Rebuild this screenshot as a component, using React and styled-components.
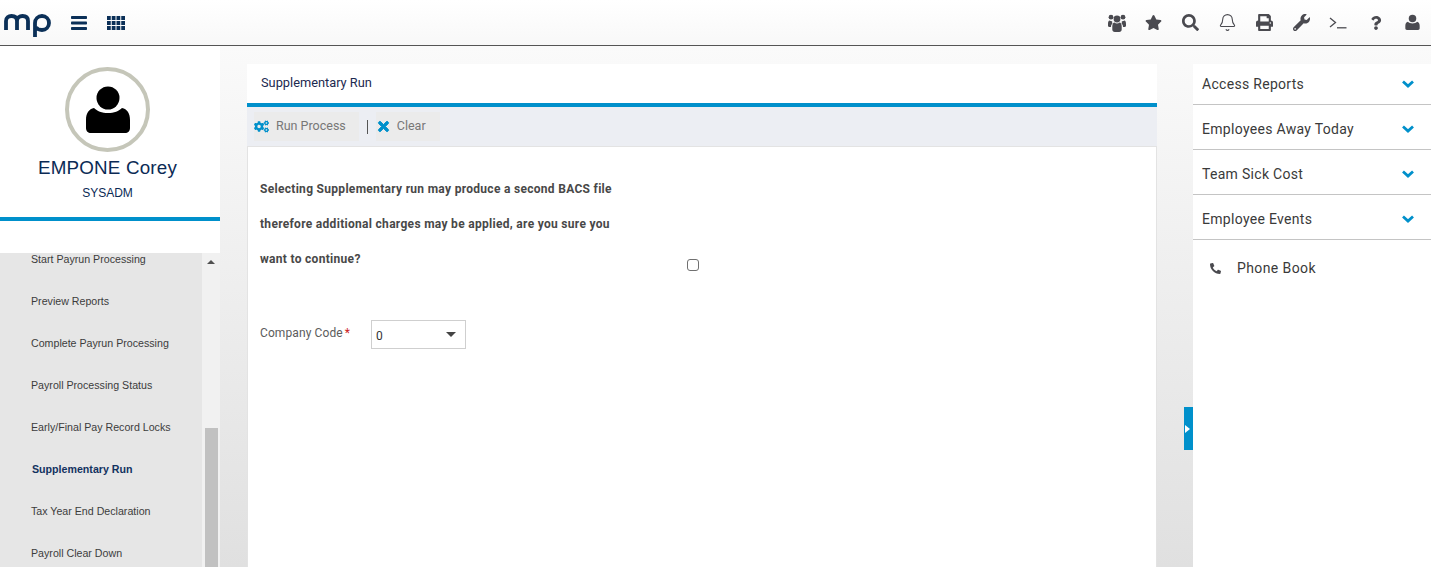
import React from "react";
import styled, { createGlobalStyle } from "styled-components";
import { FaStar, FaSearch, FaPrint, FaWrench, FaQuestion, FaPhone, FaCogs, FaTimes } from "react-icons/fa";
import { Bell } from "lucide-react";

const Global = createGlobalStyle`
  html, body { margin: 0; height: 100%; overflow: hidden; }
  body { font-family: Roboto, "Liberation Sans", sans-serif; background: #fff; }
  * { box-sizing: border-box; }
`;

const Pagina = styled.div`
  width: 1431px;
  height: 567px;
  display: flex;
  flex-direction: column;
  overflow: hidden;
`;

const Cabecera = styled.header`
  height: 46px;
  flex: none;
  display: flex;
  align-items: center;
  justify-content: space-between;
  background: linear-gradient(#ffffff, #f8f8f8);
  border-bottom: 1px solid #555;
  padding: 0 0 0 4px;
`;

const GrupoIzq = styled.div`
  display: flex;
  align-items: center;
  color: #0b3058;
`;

const Logo = styled.svg`
  width: 47px;
  height: 23px;
  margin: 6px 20px 0 0;
`;

const GrupoDer = styled.div`
  display: flex;
  align-items: center;
`;

const IconoBarra = styled.span`
  width: 37px;
  height: 22px;
  display: flex;
  align-items: center;
  justify-content: center;
  color: #4a4a50;
  font-size: ${(p) => p.$size || 17}px;
`;

const Cuerpo = styled.div`
  flex: 1;
  display: flex;
  min-height: 0;
  background: linear-gradient(#fafafa, #e0e0e0);
`;

const Lateral = styled.aside`
  width: 220px;
  flex: none;
  display: flex;
  flex-direction: column;
  background: #fff;
`;

const Perfil = styled.div`
  height: 175px;
  flex: none;
  border-bottom: 4px solid #0090cb;
  display: flex;
  flex-direction: column;
  align-items: center;
  padding: 21px 5px 0 0;
  color: #0b2a55;
`;

const Avatar = styled.div`
  width: 85px;
  height: 85px;
  border-radius: 50%;
  border: 4px solid #c5c6b9;
  color: #000;
  display: flex;
  align-items: center;
  justify-content: center;
`;

const Nombre = styled.div`
  font-family: "Liberation Sans", sans-serif;
  font-size: 18.8px;
  line-height: 22px;
  margin-top: 5px;
  letter-spacing: 0.2px;
`;

const Rol = styled.div`
  font-family: "Liberation Sans", sans-serif;
  font-size: 12px;
  line-height: 14px;
  margin-top: 7px;
`;

const Menu = styled.nav`
  margin-top: 32px;
  flex: 1;
  min-height: 0;
  display: flex;
  overflow: hidden;
`;

const MenuLista = styled.ul`
  width: 202px;
  flex: none;
  margin: 0;
  padding: 0;
  list-style: none;
  background: #e6e6e6;
`;

const MenuItem = styled.li`
  height: 42px;
  padding-left: ${(p) => (p.$activo ? 32 : 31)}px;
  font-family: "Liberation Sans", sans-serif;
  font-size: 10.65px;
  line-height: 13px;
  color: ${(p) => (p.$activo ? "#12325f" : "#3c3c3c")};
  font-weight: ${(p) => (p.$activo ? 700 : 400)};
`;

const BarraScroll = styled.div`
  width: 18px;
  flex: none;
  background: #f1f1f1;
  display: flex;
  flex-direction: column;
  align-items: center;
`;

const FlechaScroll = styled.div`
  margin-top: 7px;
  width: 0;
  height: 0;
  border-left: 4px solid transparent;
  border-right: 4px solid transparent;
  border-bottom: 4px solid #505050;
`;

const PulgarScroll = styled.div`
  width: 13px;
  flex: 1;
  margin-top: 164px;
  background: #c1c1c1;
  align-self: flex-start;
  margin-left: 3px;
`;

const Centro = styled.main`
  width: 910px;
  flex: none;
  margin: 18px 0 0 27px;
  display: flex;
  flex-direction: column;
`;

const TituloBarra = styled.div`
  height: 43px;
  flex: none;
  background: #fff;
  border-bottom: 4px solid #0090cb;
  padding-left: 14px;
  font-size: 12.8px;
  line-height: 37px;
  color: #1c2a50;
`;

const Herramientas = styled.div`
  height: 39px;
  flex: none;
  background: #eceef3;
  display: flex;
  align-items: center;
  padding-left: 7px;
  font-size: 12.5px;
`;

const BotonHerr = styled.button`
  height: 29px;
  border: none;
  background: #ebebeb;
  color: #777;
  font: inherit;
  display: flex;
  align-items: center;
  gap: ${(p) => p.$gap}px;
  padding: 0 ${(p) => p.$derecha}px 3px 0;
  cursor: pointer;
  svg { color: #0090cb; flex: none; margin-top: 3px; }
`;

const Separador = styled.span`
  width: 1px;
  height: 14px;
  background: #555;
  margin: 0 8px;
`;

const Contenido = styled.section`
  flex: 1;
  background: #fff;
  border: 1px solid #e3e3e3;
  border-bottom: none;
  padding: 25px 12px 0;
`;

const FilaAviso = styled.div`
  display: flex;
  align-items: flex-start;
`;

const Aviso = styled.div`
  width: 427px;
  flex: none;
  font-size: 12px;
  font-weight: 700;
  line-height: 35px;
  color: #484848;
  letter-spacing: 0.3px;
`;

const Casilla = styled.input`
  appearance: none;
  width: 12px;
  height: 12px;
  margin: 87px 0 0 0;
  background: #fff;
  border: 1px solid #707070;
  border-radius: 3px;
`;

const FilaCampo = styled.div`
  display: flex;
  align-items: flex-start;
  margin-top: 43px;
`;

const Etiqueta = styled.label`
  width: 111px;
  flex: none;
  font-size: 12px;
  line-height: 26px;
  color: #5c5c5c;
  letter-spacing: 0.1px;
  em { color: #c22; font-style: normal; margin-left: 2px; }
`;

const Selector = styled.div`
  width: 95px;
  height: 29px;
  border: 1px solid #cfcfcf;
  display: flex;
  align-items: center;
  justify-content: space-between;
  padding: 3px 9px 0 4px;
  font-size: 12px;
  color: #333;
`;

const Triangulo = styled.span`
  width: 0;
  height: 0;
  margin-top: -3px;
  border-left: 5px solid transparent;
  border-right: 5px solid transparent;
  border-top: 5px solid #444;
`;

const Derecha = styled.aside`
  width: 238px;
  flex: none;
  margin: 18px 0 0 36px;
  background: #fff;
  position: relative;
`;

const Acordeon = styled.div`
  height: 45px;
  border-bottom: 1px solid #c4c4c4;
  display: flex;
  align-items: flex-end;
  justify-content: space-between;
  padding: 0 17px 12px 9px;
  font-size: 14px;
  line-height: 16px;
  color: #3a3a3a;
  letter-spacing: 0.3px;
  &:first-child { height: 41px; }
  svg { margin-bottom: 4px; }
`;

const EnlaceTel = styled.div`
  display: flex;
  align-items: center;
  height: 56px;
  padding-left: 17px;
  font-size: 14px;
  color: #3a3a3a;
  letter-spacing: 0.4px;
  svg { color: #4a4a4f; margin-right: 16px; }
`;

const Asa = styled.div`
  position: absolute;
  left: -9px;
  top: 343px;
  width: 9px;
  height: 43px;
  background: #0090cb;
  display: flex;
  align-items: center;
  padding-left: 1px;
  &::after {
    content: "";
    border-top: 4px solid transparent;
    border-bottom: 4px solid transparent;
    border-left: 5px solid #fff;
  }
`;

const menu = [
  "Start Payrun Processing",
  "Preview Reports",
  "Complete Payrun Processing",
  "Payroll Processing Status",
  "Early/Final Pay Record Locks",
  "Supplementary Run",
  "Tax Year End Declaration",
  "Payroll Clear Down",
];

const acordeones = ["Access Reports", "Employees Away Today", "Team Sick Cost", "Employee Events"];

const IconoHamburguesa = () => (
  <svg width="16" height="14" viewBox="0 0 16 14" fill="currentColor" style={{ marginRight: 20 }}>
    <rect y="0" width="16" height="3" rx="0.8" />
    <rect y="5.5" width="16" height="3" rx="0.8" />
    <rect y="11" width="16" height="3" rx="0.8" />
  </svg>
);

const IconoRejilla = () => (
  <svg width="18" height="14" viewBox="0 0 18 14" fill="currentColor">
    {[0, 5, 10].map((y) =>
      [0, 4.75, 9.5, 14.25].map((x) => <rect key={`${x}-${y}`} x={x} y={y} width="3.75" height="4" />)
    )}
  </svg>
);

const IconoGrupo = () => (
  <svg width="18" height="18" viewBox="0 0 18 18" fill="currentColor">
    <circle cx="3" cy="3.2" r="2.4" />
    <circle cx="15" cy="3.2" r="2.4" />
    <circle cx="9" cy="5" r="3.4" />
    <path d="M0 10c0-2 .6-3.4 1.6-3.4.8.5 1.6.8 2.6.7-.2 1-.1 1.6.3 2.3C3.400 10.400 3 11.500 3 13H1.200C.4 13 0 12.500 0 11.800z" />
    <path d="M18 10c0-2-.6-3.400-1.600-3.400-.8.5-1.600.8-2.600.7.2 1 .1 1.600-.3 2.300 1.100.8 1.500 1.900 1.500 3.400h1.800c.8 0 1.200-.5 1.200-1.200z" />
    <path d="M4.300 12.500c0-2.300 1-3.900 2.200-3.900.7.6 1.500.9 2.500.9s1.800-.3 2.500-.9c1.200 0 2.200 1.600 2.200 3.900v3c0 1.500-1 2.500-2.500 2.500H6.800c-1.500 0-2.500-1-2.500-2.500z" />
  </svg>
);

const IconoPrompt = () => (
  <svg width="18" height="12" viewBox="0 0 18 12" fill="none" stroke="currentColor" strokeWidth="1.3" style={{ marginLeft: -1 }}>
    <path d="M1 1l5.500 4.500L1 10" />
    <path d="M8 10.800h9.500" />
  </svg>
);

const IconoPersona = ({ ancho, alto }) => (
  <svg width={ancho} height={alto} viewBox="0 0 46 48" fill="currentColor">
    <circle cx="23" cy="12" r="11.500" />
    <path d="M9 22c3 3 8 5 14 5s11-2 14-5c5 1 8 5 8 12v8c0 3-2 5-5 5H6c-3 0-5-2-5-5v-8c0-7 3-11 8-12z" />
  </svg>
);

const Chevron = () => (
  <svg width="12" height="8" viewBox="0 0 12 8" fill="none" stroke="#0090cb" strokeWidth="2.800">
    <path d="M1 1.500l5 4.500 5-4.500" />
  </svg>
);

export default function App() {
  return (
    <Pagina>
      <Global />
      <Cabecera>
        <GrupoIzq>
          <Logo viewBox="0 0 47 23" fill="none" stroke="#0b3058" strokeWidth="3.800">
            <path d="M2 16V7c0-3.500 2.500-5 5.500-5S13 3.500 13 7v9M13 7c0-3.500 2.500-5 5.500-5S24 3.500 24 7v9" />
            <path d="M31 23V9c0-4 3-7 7-7s7 3 7 7-3 7-7 7c-2.500 0-5-1-6-3" />
          </Logo>
          <IconoHamburguesa />
          <IconoRejilla />
        </GrupoIzq>
        <GrupoDer>
          <IconoBarra><IconoGrupo /></IconoBarra>
          <IconoBarra><FaStar /></IconoBarra>
          <IconoBarra><FaSearch /></IconoBarra>
          <IconoBarra><Bell size={19} strokeWidth={1.4} /></IconoBarra>
          <IconoBarra><FaPrint /></IconoBarra>
          <IconoBarra><FaWrench /></IconoBarra>
          <IconoBarra><IconoPrompt /></IconoBarra>
          <IconoBarra $size={14}><FaQuestion /></IconoBarra>
          <IconoBarra><IconoPersona ancho={15} alto={17} /></IconoBarra>
        </GrupoDer>
      </Cabecera>
      <Cuerpo>
        <Lateral>
          <Perfil>
            <Avatar><IconoPersona ancho={46} alto={48} /></Avatar>
            <Nombre>EMPONE Corey</Nombre>
            <Rol>SYSADM</Rol>
          </Perfil>
          <Menu>
            <MenuLista>
              {menu.map((m) => (
                <MenuItem key={m} $activo={m === "Supplementary Run"}>{m}</MenuItem>
              ))}
            </MenuLista>
            <BarraScroll>
              <FlechaScroll />
              <PulgarScroll />
            </BarraScroll>
          </Menu>
        </Lateral>
        <Centro>
          <TituloBarra>Supplementary Run</TituloBarra>
          <Herramientas>
            <BotonHerr $gap={7} $derecha={13}><FaCogs size={15} />Run Process</BotonHerr>
            <Separador />
            <BotonHerr $gap={6} $derecha={14}>
              <FaTimes size={15} stroke="currentColor" strokeWidth={30} />Clear
            </BotonHerr>
          </Herramientas>
          <Contenido>
            <FilaAviso>
              <Aviso>
                Selecting Supplementary run may produce a second BACS file<br />
                therefore additional charges may be applied, are you sure you<br />
                want to continue?
              </Aviso>
              <Casilla type="checkbox" />
            </FilaAviso>
            <FilaCampo>
              <Etiqueta>Company Code<em>*</em></Etiqueta>
              <Selector>0<Triangulo /></Selector>
            </FilaCampo>
          </Contenido>
        </Centro>
        <Derecha>
          {acordeones.map((a) => (
            <Acordeon key={a}>{a}<Chevron /></Acordeon>
          ))}
          <EnlaceTel><FaPhone size={11} style={{ transform: "scaleX(-1)" }} />Phone Book</EnlaceTel>
          <Asa />
        </Derecha>
      </Cuerpo>
    </Pagina>
  );
}
